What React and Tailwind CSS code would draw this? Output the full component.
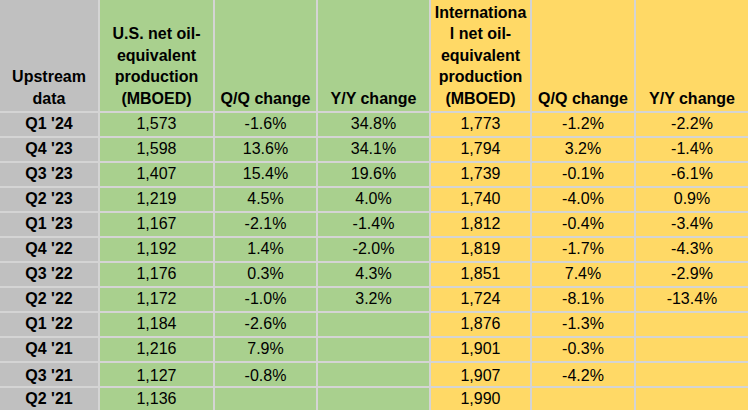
import React from "react";

const rows = [
  ["Q1 '24", "1,573", "-1.6%", "34.8%", "1,773", "-1.2%", "-2.2%"],
  ["Q4 '23", "1,598", "13.6%", "34.1%", "1,794", "3.2%", "-1.4%"],
  ["Q3 '23", "1,407", "15.4%", "19.6%", "1,739", "-0.1%", "-6.1%"],
  ["Q2 '23", "1,219", "4.5%", "4.0%", "1,740", "-4.0%", "0.9%"],
  ["Q1 '23", "1,167", "-2.1%", "-1.4%", "1,812", "-0.4%", "-3.4%"],
  ["Q4 '22", "1,192", "1.4%", "-2.0%", "1,819", "-1.7%", "-4.3%"],
  ["Q3 '22", "1,176", "0.3%", "4.3%", "1,851", "7.4%", "-2.9%"],
  ["Q2 '22", "1,172", "-1.0%", "3.2%", "1,724", "-8.1%", "-13.4%"],
  ["Q1 '22", "1,184", "-2.6%", "", "1,876", "-1.3%", ""],
  ["Q4 '21", "1,216", "7.9%", "", "1,901", "-0.3%", ""],
  ["Q3 '21", "1,127", "-0.8%", "", "1,907", "-4.2%", ""],
  ["Q2 '21", "1,136", "", "", "1,990", "", ""],
];

const headers = [
  ["Upstream", "data"],
  ["U.S. net oil-", "equivalent", "production", "(MBOED)"],
  ["Q/Q change"],
  ["Y/Y change"],
  ["Internationa", "l net oil-", "equivalent", "production", "(MBOED)"],
  ["Q/Q change"],
  ["Y/Y change"],
];

const bgFor = (i) =>
  i === 0 ? "bg-[#c0c0c0]" : i <= 3 ? "bg-[#a9d08e]" : "bg-[#ffd966]";

export default function App() {
  return (
    <div
      className="w-[748px] h-[410px] overflow-hidden bg-[#d4d4d4] text-black"
      style={{ fontFamily: '"Liberation Sans", Arial, sans-serif' }}
    >
      <div className="grid grid-cols-[98px_113px_101px_111px_99px_102px_112px] grid-rows-[111px_repeat(12,23px)] gap-[2px]">
        {headers.map((lines, i) => (
          <div
            key={"h" + i}
            className={`${bgFor(i)} flex flex-col justify-end items-center text-center font-bold text-[16px] leading-[21.5px] pb-[2px] whitespace-nowrap`}
          >
            {lines.map((l, j) => (
              <span key={j}>{l}</span>
            ))}
          </div>
        ))}
        {rows.map((r, ri) =>
          r.map((cell, ci) => (
            <div
              key={ri + "-" + ci}
              className={`${bgFor(ci)} flex items-center justify-center text-[16px] leading-[18px] whitespace-nowrap ${
                ci === 0 ? "font-bold" : ""
              } ${ri === 10 ? "pt-[3px]" : "pb-[2px]"}`}
            >
              {cell}
            </div>
          ))
        )}
      </div>
    </div>
  );
}
